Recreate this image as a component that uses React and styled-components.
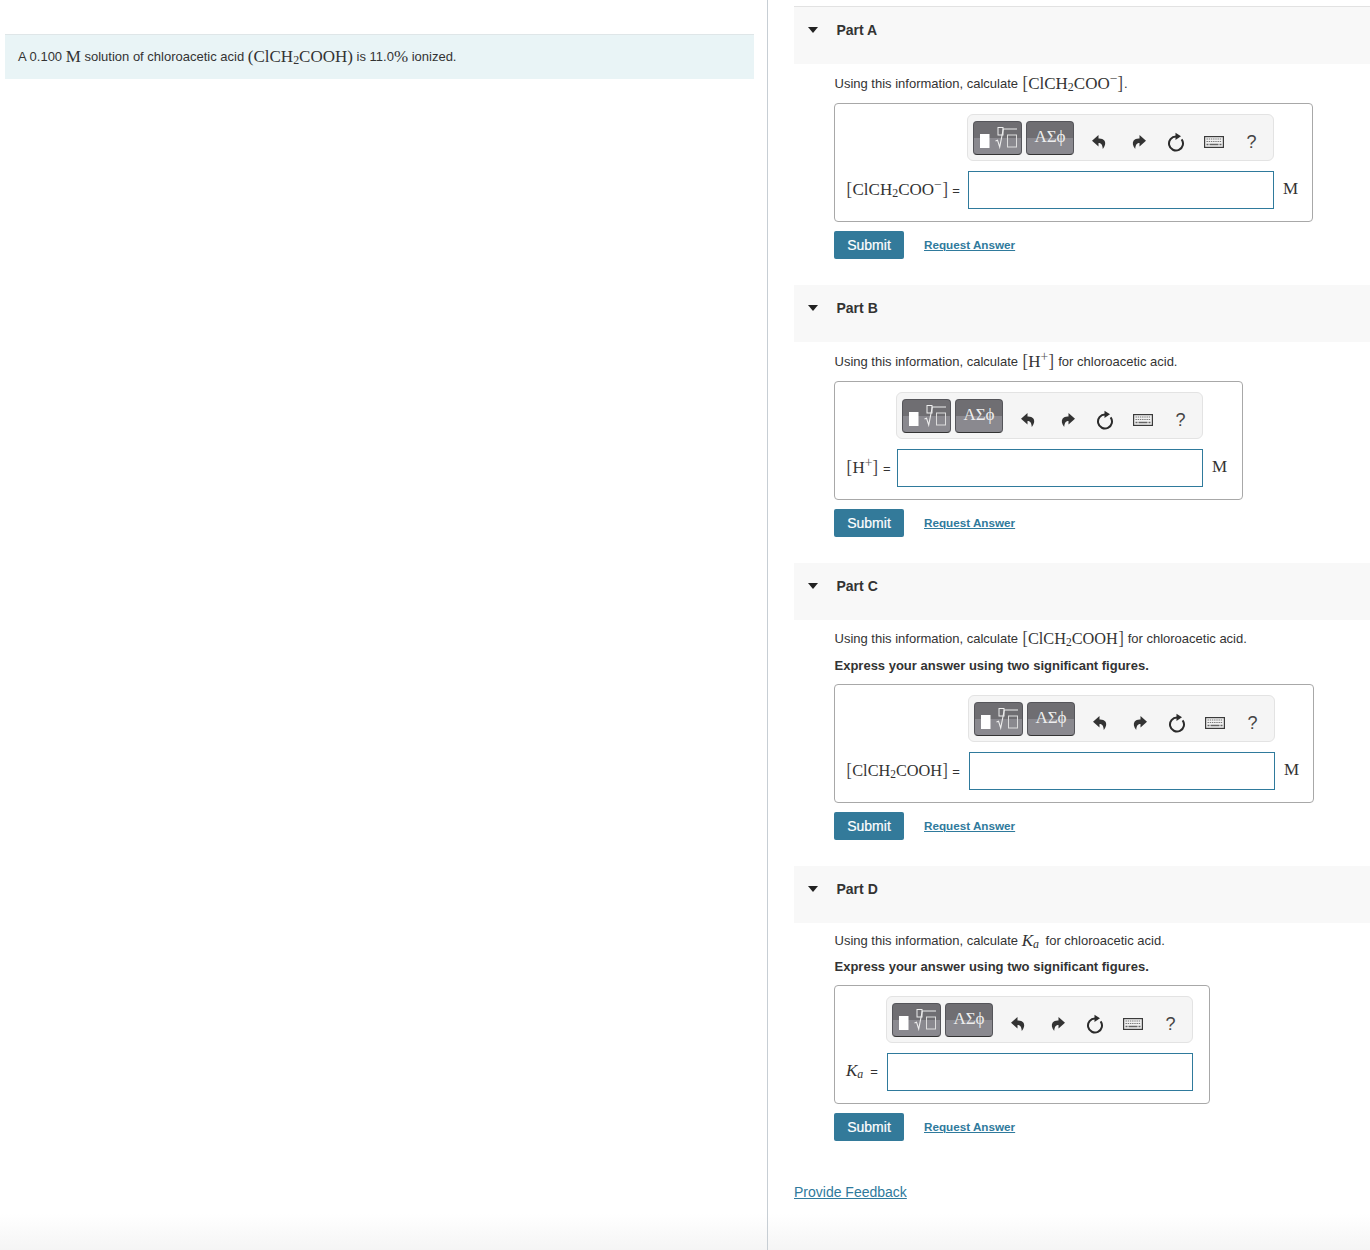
import React from "react";
import styled, { createGlobalStyle } from "styled-components";

const GlobalStyle = createGlobalStyle`
  html, body {
    margin: 0;
    padding: 0;
    background: #fff;
  }
  body {
    font-family: "Liberation Sans", Arial, sans-serif;
    color: #333;
  }
`;

const UndoIcon = ({ flip }) => (
  <svg width="16" height="17" viewBox="0 0 16 17" style={flip ? { transform: "scaleX(-1)" } : undefined}>
    <path
      d="M7.500 1 1 6.800l6.500 5.700V9c2.400 0 4 1.500 4.300 6 2.700-3.500 3-6.500 1.500-8.500C12.200 5 10 4.300 7.500 4.500z"
      transform="translate(-1 0)"
      fill="#333"
    />
  </svg>
);

const RefreshIcon = () => (
  <svg width="18" height="20" viewBox="0 0 18 20">
    <path d="M9 4.500A7 7 0 1 0 14.600 7.300" fill="none" stroke="#2b2b2b" strokeWidth="2" />
    <path d="M8.500 0.800 14 4.300 8.500 8z" fill="#2b2b2b" />
  </svg>
);

const KeyboardIcon = () => (
  <svg width="20" height="12" viewBox="0 0 20 12">
    <rect x="0.600" y="0.600" width="18.800" height="10.800" fill="#f1f1f1" stroke="#3a3a3a" strokeWidth="1.200" />
    <path d="M2.500 3h15M2.500 5.500h15" stroke="#777" strokeWidth="1.200" strokeDasharray="1.400 0.800" />
    <path d="M2.500 8.500h2M5.500 8.500h9M15.500 8.500h2" stroke="#666" strokeWidth="1.400" />
  </svg>
);

const TemplateIcon = () => (
  <TemplateSvg width="42" height="30" viewBox="0 0 42 30">
    <rect x="5" y="11" width="9.500" height="14" fill="#fff" />
    <rect x="23" y="4.500" width="5" height="7.500" fill="none" stroke="#eee" strokeWidth="1" />
    <path d="M20.500 18l2-.8 2.200 6.800 3.600-18H42" fill="none" stroke="#eee" strokeWidth="1.100" />
    <rect x="32.500" y="12" width="9" height="12" fill="none" stroke="#ddd" strokeWidth="1" />
  </TemplateSvg>
);

const Toolbar = () => (
  <ToolbarWrap>
    <PaletteButton $width={49}>
      <TemplateIcon />
    </PaletteButton>
    <PaletteButton $width={48}>
      <GreekText>ΑΣϕ</GreekText>
    </PaletteButton>
    <ToolGroup>
      <ToolSlot><UndoIcon /></ToolSlot>
      <ToolSlot><UndoIcon flip /></ToolSlot>
      <ToolSlot><RefreshIcon /></ToolSlot>
      <ToolSlot><KeyboardIcon /></ToolSlot>
      <ToolSlot><HelpMark>?</HelpMark></ToolSlot>
    </ToolGroup>
  </ToolbarWrap>
);

const AnswerBox = ({ label, labelWidth, unit, unitWidth }) => (
  <Box $labelWidth={labelWidth} $unitWidth={unitWidth}>
    <ToolbarCell>
      <Toolbar />
    </ToolbarCell>
    <LabelCell>
      {label}
      <Equals>=</Equals>
    </LabelCell>
    <AnswerInput aria-label="answer" />
    {unit && <UnitCell><Mi>{unit}</Mi></UnitCell>}
  </Box>
);

const ChloroAcetate = () => (
  <Mi>
    <Bracket>[</Bracket>ClCH<MSub>2</MSub>COO<MSup>−</MSup><Bracket>]</Bracket>
  </Mi>
);

const ChloroAcid = () => (
  <Mi $size={16.3}>
    <Bracket>[</Bracket>ClCH<MSub>2</MSub>COOH<Bracket>]</Bracket>
  </Mi>
);

const Hydrogen = () => (
  <Mi>
    <Bracket>[</Bracket>H<MSup>+</MSup><Bracket>]</Bracket>
  </Mi>
);

const Ka = () => (
  <KaMark>
    <Italic>K</Italic><MSub $italic>a</MSub>
  </KaMark>
);

const parts = [
  {
    id: "A",
    top: 9,
    gap: 10,
    prompt: <>Using this information, calculate <ChloroAcetate />.</>,
    label: <ChloroAcetate />,
    labelWidth: 122,
    unit: "M",
    unitWidth: 38,
  },
  {
    id: "B",
    top: 9,
    gap: 10,
    prompt: <>Using this information, calculate <Hydrogen /> for chloroacetic acid.</>,
    label: <Hydrogen />,
    labelWidth: 51,
    unit: "M",
    unitWidth: 39,
  },
  {
    id: "C",
    top: 9,
    gap: 7,
    prompt: <>Using this information, calculate <ChloroAcid /> for chloroacetic acid.</>,
    note: "Express your answer using two significant figures.",
    label: <ChloroAcid />,
    labelWidth: 123,
    unit: "M",
    unitWidth: 38,
  },
  {
    id: "D",
    top: 8,
    gap: 6,
    prompt: <>Using this information, calculate <Ka /> for chloroacetic acid.</>,
    note: "Express your answer using two significant figures.",
    label: <Ka />,
    labelWidth: 41,
    unitWidth: 16,
  },
];

const App = () => (
  <>
    <GlobalStyle />
    <Page>
      <LeftColumn>
        <Problem>
          A 0.100 <Mi>M</Mi> solution of chloroacetic acid{" "}
          <Mi>(ClCH<MSub>2</MSub>COOH)</Mi> is 11.0<Mi>%</Mi> ionized.
        </Problem>
      </LeftColumn>
      <RightColumn>
        {parts.map((part, i) => (
          <section key={part.id}>
            <PartHeader $first={i === 0}>
              <Caret />
              <PartTitle>Part {part.id}</PartTitle>
            </PartHeader>
            <PartBody $top={part.top}>
              <Prompt>{part.prompt}</Prompt>
              {part.note ? (
                <>
                  <Note $top={part.gap}>{part.note}</Note>
                  <BoxSpacer $height={8} />
                </>
              ) : (
                <BoxSpacer $height={part.gap} />
              )}
              <AnswerBox
                label={part.label}
                labelWidth={part.labelWidth}
                unit={part.unit}
                unitWidth={part.unitWidth}
              />
              <Actions>
                <SubmitButton>Submit</SubmitButton>
                <RequestLink href="#">Request Answer</RequestLink>
              </Actions>
            </PartBody>
          </section>
        ))}
        <Feedback href="#">Provide Feedback</Feedback>
      </RightColumn>
    </Page>
  </>
);

export default App;

const Mi = styled.span`
  font-family: "Liberation Serif", "Times New Roman", serif;
  font-size: ${(p) => p.$size || 17}px;
  color: #333;
  line-height: 1;
`;
const KaMark = styled(Mi)`
  margin-right: 3px;
`;
const Page = styled.div`
  display: grid;
  grid-template-columns: 767px 1fr;
  height: 1250px;
  overflow: hidden;
  background: linear-gradient(#fff, #f5f5f5) bottom / 100% 36px no-repeat;
`;
const LeftColumn = styled.div`
  padding: 34px 13px 0 5px;
`;
const Problem = styled.div`
  height: 44px;
  line-height: 44px;
  padding-left: 13px;
  background: #e9f4f6;
  border-top: 1px solid #dfe6e8;
  font-size: 13px;
  white-space: nowrap;

  ${Mi} {
    vertical-align: -1px;
  }
`;
const RightColumn = styled.div`
  border-left: 1px solid #c7ced4;
  padding: 6px 0 0 26px;
`;
const PartHeader = styled.header`
  display: flex;
  align-items: flex-start;
  height: 57px;
  padding: 15px 0 0 14px;
  box-sizing: border-box;
  background: #f8f8f8;
  border-top: ${(p) => (p.$first ? "1px solid #e2e2e2" : "0")};
  ${(p) => p.$first && "height: 58px;"}
`;
const Caret = styled.span`
  width: 0;
  height: 0;
  margin-top: 5px;
  border-left: 5.5px solid transparent;
  border-right: 5.5px solid transparent;
  border-top: 6px solid #222;
`;
const PartTitle = styled.h3`
  margin: 0 0 0 18.5px;
  font-size: 14px;
  line-height: 17px;
  font-weight: 700;
  color: #333;
`;
const PartBody = styled.div`
  padding: ${(p) => p.$top}px 0 26px 40px;
`;
const Prompt = styled.p`
  margin: 0;
  height: 20px;
  padding-left: 0.5px;
  line-height: 20px;
  font-size: 13px;
  color: #333;
  white-space: nowrap;

  ${Mi} {
    vertical-align: -1px;
  }
`;
const Note = styled.p`
  margin: ${(p) => p.$top}px 0 0;
  height: 20px;
  padding-left: 0.5px;
  line-height: 20px;
  font-size: 13px;
  font-weight: 700;
  color: #333;
`;
const BoxSpacer = styled.div`
  height: ${(p) => p.$height}px;
`;
const Italic = styled.i`
  font-style: italic;
`;
const Bracket = styled.span`
  display: inline-block;
  font-size: 1.15em;
  font-weight: 400;
  color: #444;
  transform: scaleX(0.85);
  line-height: 1;
`;
const MSub = styled.sub`
  font-size: 0.7em;
  line-height: 0;
  vertical-align: -0.2em;
  font-style: ${(p) => (p.$italic ? "italic" : "normal")};
`;
const MSup = styled.sup`
  font-size: 0.8em;
  line-height: 0;
  vertical-align: 0.45em;
  color: #555;
`;
const Box = styled.div`
  display: inline-grid;
  grid-template-columns: ${(p) => p.$labelWidth}px 306px ${(p) => p.$unitWidth}px;
  grid-template-rows: 47px 38px;
  row-gap: 10px;
  align-items: center;
  vertical-align: top;
  padding: 10px 0 12px 11px;
  border: 1px solid #a8a8a8;
  border-radius: 4px;
  background: #fff;
`;
const ToolbarCell = styled.div`
  grid-column: 2;
  grid-row: 1;
  margin-left: -1px;
`;
const ToolbarWrap = styled.div`
  display: flex;
  align-items: flex-start;
  gap: 4px;
  height: 47px;
  padding: 6px 0 0 5px;
  box-sizing: border-box;
  background: #f5f5f5;
  border: 1px solid #e3e3e3;
  border-radius: 6px;
`;
const PaletteButton = styled.div`
  display: flex;
  align-items: center;
  justify-content: center;
  width: ${(p) => p.$width}px;
  height: 34px;
  box-sizing: border-box;
  border: 1px solid #55555a;
  border-bottom-color: #333;
  border-radius: 4px;
  background: linear-gradient(#6f6e72 50%, #8a898f 50%);
`;
const TemplateSvg = styled.svg`
  margin-left: -3px;
`;
const GreekText = styled.span`
  font-family: "Liberation Serif", "DejaVu Serif", serif;
  font-size: 17px;
  color: #eee;
  margin-top: -3px;
`;
const ToolGroup = styled.div`
  display: flex;
  margin-left: 2.5px;
`;
const ToolSlot = styled.div`
  display: flex;
  align-items: center;
  justify-content: center;
  width: 38px;
  height: 42px;
`;
const HelpMark = styled.span`
  font-size: 18px;
  color: #444;
`;
const LabelCell = styled.div`
  grid-column: 1;
  grid-row: 2;
  margin-bottom: 2px;
  white-space: nowrap;
`;
const Equals = styled.span`
  margin-left: 4px;
  font-size: 13px;
  color: #333;
`;
const AnswerInput = styled.input`
  grid-column: 2;
  grid-row: 2;
  width: 306px;
  height: 38px;
  box-sizing: border-box;
  border: 1px solid #2f7a9c;
  background: #fff;
  outline: 0;
`;
const UnitCell = styled.div`
  grid-column: 3;
  grid-row: 2;
  margin-bottom: 2px;
  padding-left: 9px;
`;
const Actions = styled.div`
  display: flex;
  align-items: center;
  margin-top: 9px;
`;
const SubmitButton = styled.button`
  width: 70px;
  height: 28px;
  padding: 0;
  border: 0;
  border-radius: 2px;
  background: #337a9a;
  color: #fff;
  font-family: inherit;
  font-size: 14px;
  -webkit-text-stroke: 0.2px #fff;
`;
const RequestLink = styled.a`
  margin: 0 0 2px 20px;
  font-size: 11.7px;
  font-weight: 700;
  color: #2f7a9c;
  text-decoration: underline;
`;
const Feedback = styled.a`
  display: block;
  width: fit-content;
  margin-top: 15px;
  font-size: 14px;
  line-height: 20px;
  color: #2f7a9c;
  text-decoration: underline;
`;
